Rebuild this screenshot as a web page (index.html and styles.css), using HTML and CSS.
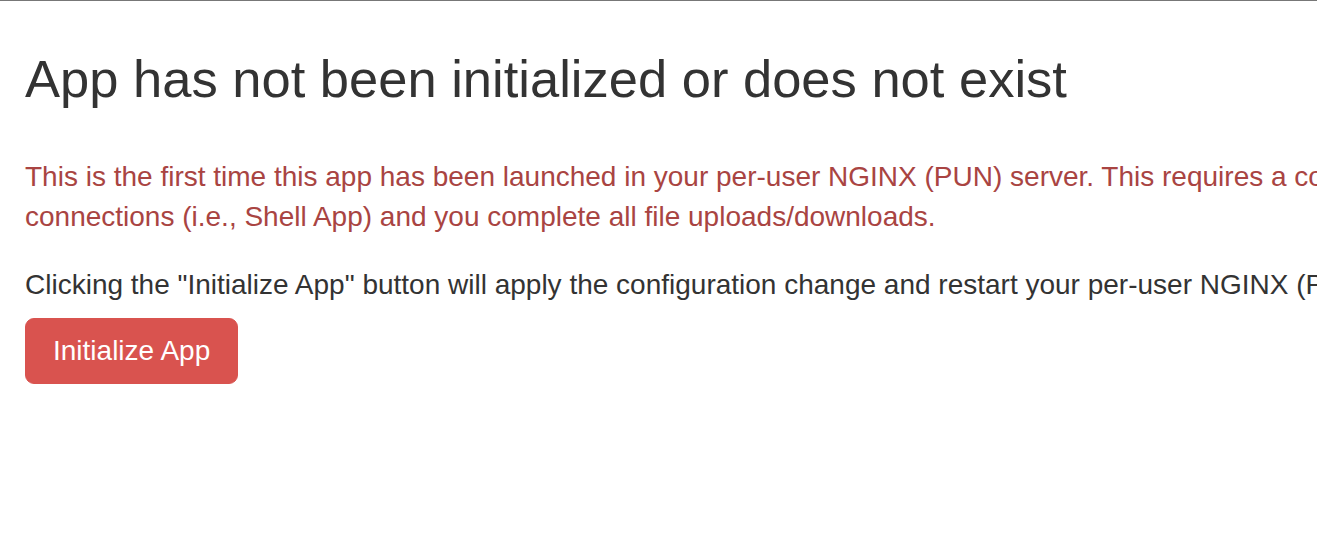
FILE: index.html
```html
<!DOCTYPE html>
<html lang="en">
<head>
    <meta charset="UTF-8">
    <meta name="viewport" content="width=device-width, initial-scale=1.0">
    <title>App Initialization</title>
    <link rel="stylesheet" href="styles.css">
</head>
<body>

    <div class="app-init">
        <h1>App has not been initialized or does not exist</h1>

        <p class="text-danger">
            This is the first time this app has been launched in your per-user NGINX (PUN) server. This requires a configuration change followed by a restart of your PUN server. Be sure you save all the work you are doing in other apps that have active websocket<br>
            connections (i.e., Shell App) and you complete all file uploads/downloads.
        </p>

        <p>
            Clicking the "Initialize App" button will apply the configuration change and restart your per-user NGINX (PUN) server.
        </p>

        <form action="#" method="post">
            <button type="submit" class="btn btn-danger">Initialize App</button>
        </form>
    </div>

</body>
</html>
```

FILE: styles.css
```css
html {
    overflow: hidden;
}
body {
    font-family: "Liberation Sans", Arial, sans-serif;
    font-size: 28px;
    line-height: 40px;
    color: #333333;
    background-color: #ffffff;
    margin: 0;
    border-top: 1px solid #777777;
}
.app-init {
    width: 3800px;
    padding: 0 25px;
}
h1 {
    font-size: 52.5px;
    font-weight: normal;
    line-height: 1.1;
    margin: 49px 0 49px;
}
p {
    margin: 0 0 28px;
}
p.text-danger {
    color: #a94442;
}
form {
    margin: -15px 0 0;
}
.btn {
    font-family: inherit;
    font-size: 28px;
    line-height: 36px;
    padding: 14px 27px;
    border: 1px solid #d9534f;
    border-radius: 9px;
    cursor: pointer;
}
.btn-danger {
    color: #ffffff;
    background-color: #d9534f;
}
```
